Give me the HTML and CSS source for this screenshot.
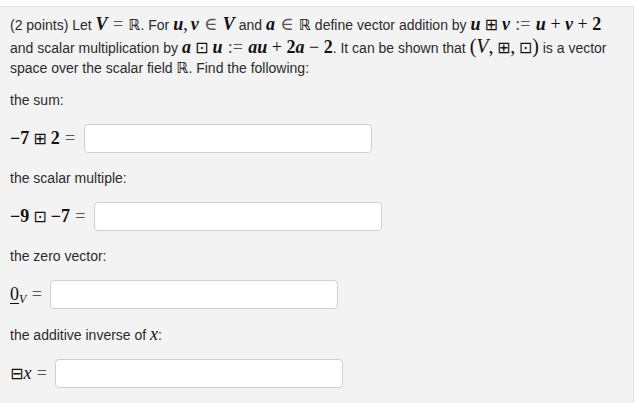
FILE: index.html
```html
<!DOCTYPE html>
<html>
<head>
<meta charset="utf-8">
<link rel="stylesheet" href="styles.css">
</head>
<body>
<div class="panel">
  <p class="intro">
    (2 points) Let <span class="m"><b class="bi">V</b><span class="rel">=</span><span class="bb">ℝ</span></span>. For <span class="m"><b class="bi">u</b>,<span class="sp"></span><b class="bi">v</b><span class="rel">∈</span><b class="bi">V</b></span> and <span class="m"><b class="bi">a</b><span class="rel">∈</span><span class="bb">ℝ</span></span> define vector addition by <span class="m"><b class="bi">u</b><span class="bin sym">⊞</span><b class="bi">v</b><span class="rel">:=</span><b class="bi">u</b><span class="bin">+</span><b class="bi">v</b><span class="bin">+</span><b>2</b></span><br>
    and scalar multiplication by <span class="m"><b class="bi">a</b><span class="bin sym">⊡</span><b class="bi">u</b><span class="rel">:=</span><b class="bi">au</b><span class="bin">+</span><b>2</b><b class="bi">a</b><span class="bin">−</span><b>2</b></span>. It can be shown that <span class="m big">(<i>V</i>,<span class="sp"></span><span class="sym">⊞</span>,<span class="sp"></span><span class="sym">⊡</span>)</span> is a vector<br>
    space over the scalar field <span class="m"><span class="bb">ℝ</span></span>. Find the following:
  </p>

  <div class="part">
    <div class="label">the sum:</div>
    <div class="row">
      <span class="m"><b>−7</b><span class="bin sym">⊞</span><b>2</b><span class="rel">=</span></span>
      <input class="answer" type="text">
    </div>
  </div>

  <div class="part">
    <div class="label">the scalar multiple:</div>
    <div class="row">
      <span class="m"><b>−9</b><span class="bin sym">⊡</span><b>−7</b><span class="rel">=</span></span>
      <input class="answer" type="text">
    </div>
  </div>

  <div class="part">
    <div class="label">the zero vector:</div>
    <div class="row">
      <span class="m"><span class="ul">0</span><sub class="subv">V</sub><span class="rel">=</span></span>
      <input class="answer" type="text">
    </div>
  </div>

  <div class="part">
    <div class="label">the additive inverse of <span class="m"><i>x</i></span>:</div>
    <div class="row">
      <span class="m"><span class="sym">⊟</span><i>x</i><span class="rel">=</span></span>
      <input class="answer" type="text">
    </div>
  </div>
</div>
</body>
</html>
```

FILE: styles.css
```css
html, body {
  margin: 0;
  padding: 0;
  background: #ffffff;
}

body {
  font-family: "Liberation Sans", Arial, sans-serif;
  font-size: 14px;
  color: #2b2b2b;
}

.panel {
  margin-top: 6px;
  width: 634px;
  height: 397px;
  box-sizing: border-box;
  background: #f3f3f3;
  border-top: 1px solid #e2e2e2;
  border-right: 1px solid #e2e2e2;
  padding: 8px 0 0 10px;
}

.intro {
  margin: 0 0 11px 0;
  line-height: 20.5px;
}

.intro .m {
  line-height: 1;
}

.m {
  font-family: "Liberation Serif", "DejaVu Serif", serif;
  font-size: 18px;
  color: #111;
  white-space: nowrap;
}

.m b {
  font-weight: bold;
}

.bi {
  font-style: italic;
  font-weight: bold;
}

.m i {
  font-style: italic;
}

.bb {
  font-family: "DejaVu Sans", sans-serif;
  font-size: 15px;
  font-weight: normal;
}

.sym {
  font-family: "DejaVu Sans", sans-serif;
  font-size: 16px;
  font-weight: normal;
}

.rel {
  margin: 0 0.3em;
  color: #555;
}

.bin {
  margin: 0 0.25em;
}

.sp {
  display: inline-block;
  width: 0.17em;
}

.big {
  font-size: 20px;
}

.ul {
  text-decoration: underline;
  text-underline-offset: 3px;
}

.subv {
  font-style: italic;
  font-size: 12px;
  vertical-align: -3px;
  line-height: 0;
}

.part {
  margin-bottom: 15px;
}

.label {
  line-height: 20px;
  margin-bottom: 14px;
}

.row {
  display: flex;
  align-items: center;
  gap: 3px;
  height: 29px;
}

.answer {
  width: 288px;
  height: 29px;
  box-sizing: border-box;
  border: 1px solid #cfcfcf;
  border-radius: 4px;
  background: #ffffff;
  margin: 0;
  padding: 0 6px;
}
```
